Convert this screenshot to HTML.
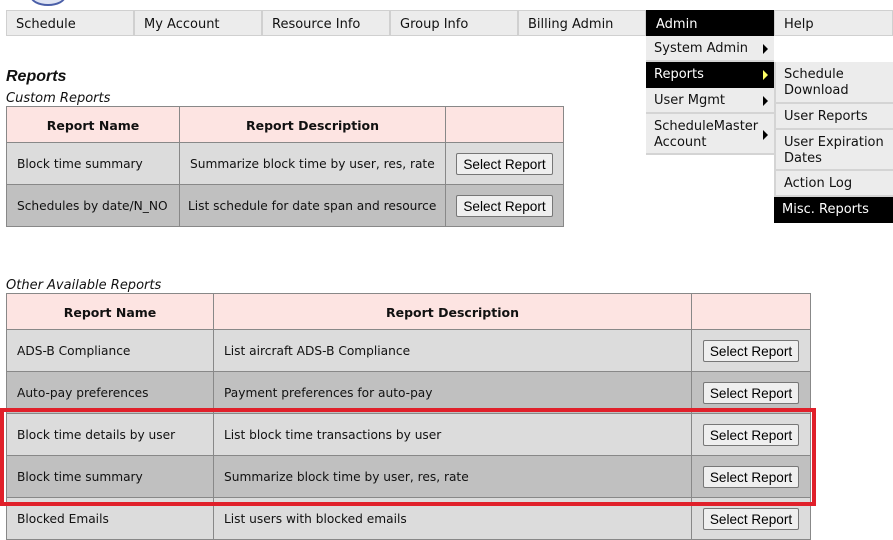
<!DOCTYPE html>
<html><head><style>
*{box-sizing:border-box;margin:0;padding:0}
body{width:893px;height:540px;overflow:hidden;background:#fff;font-family:"DejaVu Sans",Verdana,sans-serif;font-size:13px;color:#111;position:relative}
.a{position:absolute}
.nav{top:10px;height:26px;background:#ececec;border:1px solid #d0d0d0;padding:6px 0 0 9px;line-height:15px}
.m{background:#ececec;border-bottom:2px solid #d4d4d4;padding:5px 8px;line-height:16px;white-space:nowrap}
.a.blk{background:#000;color:#fff;border-color:#000}
.arr{position:absolute;right:6px;width:0;height:0;border-top:5px solid transparent;border-bottom:5px solid transparent;border-left:5px solid #000}
table{position:absolute;border-collapse:collapse;table-layout:fixed}
td{border:1px solid #888;padding:1px 10px 0;height:42px;white-space:nowrap;font-size:12.2px}
tr.h td{background:#fde4e2;font-weight:bold;text-align:center;height:36px;font-size:12.5px}
tr.r1 td{background:#dcdcdc}
tr.r2 td{background:#c0c0c0}
td.b{text-align:center}
button{font-family:"Liberation Sans",Arial,sans-serif;font-size:13.6px;background:#efefef;border:1px solid #777;border-radius:2px;padding:0 6px;height:22px;color:#000;white-space:nowrap}
</style></head><body>
<div class="a" style="left:30px;top:-14px;width:36px;height:20px;border-radius:50%;border:2px solid #4a5fa8;background:#dfe4f3"></div>
<div class="a nav" style="left:6px;width:128px">Schedule</div>
<div class="a nav" style="left:134px;width:128px">My Account</div>
<div class="a nav" style="left:262px;width:128px">Resource Info</div>
<div class="a nav" style="left:390px;width:128px">Group Info</div>
<div class="a nav" style="left:518px;width:128px">Billing Admin</div>
<div class="a nav blk" style="left:646px;width:128px">Admin</div>
<div class="a nav" style="left:774px;width:119px">Help</div>

<div class="a m" style="left:646px;top:36px;width:128px;height:26px">System Admin<span class="arr" style="top:8px"></span></div>
<div class="a m blk" style="left:646px;top:62px;width:128px;height:26px">Reports<span class="arr" style="top:8px;border-left-color:#ff6"></span></div>
<div class="a m" style="left:646px;top:88px;width:128px;height:26px">User Mgmt<span class="arr" style="top:8px"></span></div>
<div class="a m" style="left:646px;top:114px;width:128px;height:41px;padding-top:5px">ScheduleMaster<br>Account<span class="arr" style="top:16px"></span></div>

<div class="a m" style="left:774px;top:62px;width:119px;height:42px;border-left:2px solid #d4d4d4">Schedule<br>Download</div>
<div class="a m" style="left:774px;top:104px;width:119px;height:26px;border-left:2px solid #d4d4d4">User Reports</div>
<div class="a m" style="left:774px;top:130px;width:119px;height:41px;border-left:2px solid #d4d4d4">User Expiration<br>Dates</div>
<div class="a m" style="left:774px;top:171px;width:119px;height:26px;border-left:2px solid #d4d4d4">Action Log</div>
<div class="a m blk" style="left:774px;top:197px;width:119px;height:26px">Misc. Reports</div>

<div class="a" style="left:6px;top:68px;font-family:'Liberation Sans',Arial,sans-serif;font-weight:bold;font-style:italic;font-size:16px">Reports</div>
<div class="a" style="left:6px;top:91px;font-style:italic">Custom Reports</div>
<table style="left:6px;top:106px;width:557px">
<colgroup><col style="width:173px"><col style="width:266px"><col style="width:118px"></colgroup>
<tr class="h"><td>Report Name</td><td>Report Description</td><td></td></tr>
<tr class="r1"><td>Block time summary</td><td>Summarize block time by user, res, rate</td><td class="b"><button>Select Report</button></td></tr>
<tr class="r2"><td>Schedules by date/N_NO</td><td style="padding:0 8px">List schedule for date span and resource</td><td class="b"><button>Select Report</button></td></tr>
</table>

<div class="a" style="left:6px;top:278px;font-style:italic">Other Available Reports</div>
<table style="left:6px;top:293px;width:804px">
<colgroup><col style="width:207px"><col style="width:478px"><col style="width:119px"></colgroup>
<tr class="h"><td>Report Name</td><td>Report Description</td><td></td></tr>
<tr class="r1"><td>ADS-B Compliance</td><td>List aircraft ADS-B Compliance</td><td class="b"><button>Select Report</button></td></tr>
<tr class="r2"><td>Auto-pay preferences</td><td>Payment preferences for auto-pay</td><td class="b"><button>Select Report</button></td></tr>
<tr class="r1"><td>Block time details by user</td><td>List block time transactions by user</td><td class="b"><button>Select Report</button></td></tr>
<tr class="r2"><td>Block time summary</td><td>Summarize block time by user, res, rate</td><td class="b"><button>Select Report</button></td></tr>
<tr class="r1"><td>Blocked Emails</td><td>List users with blocked emails</td><td class="b"><button>Select Report</button></td></tr>
</table>
<div class="a" style="left:0;top:408px;width:816px;height:98px;border:4px solid #e0202a"></div>
</body></html>
